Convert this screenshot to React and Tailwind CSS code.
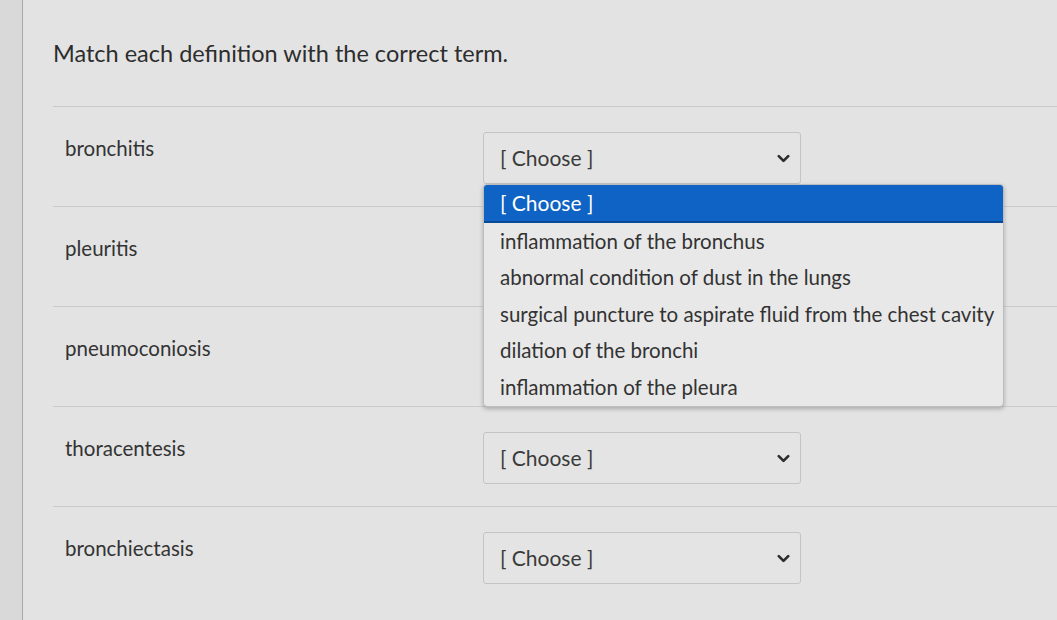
import { ChevronDown } from 'lucide-react'

const terms = ['bronchitis', 'pleuritis', 'pneumoconiosis', 'thoracentesis', 'bronchiectasis']

const options = [
  'inflammation of the bronchus',
  'abnormal condition of dust in the lungs',
  'surgical puncture to aspirate fluid from the chest cavity',
  'dilation of the bronchi',
  'inflammation of the pleura',
]

function Select({ open, hidden }) {
  return (
    <div className={`relative w-[318px] ${hidden ? 'invisible' : ''}`}>
      <div className="h-[52px] border border-[#c4c4c4] rounded-[3px] bg-[#e4e4e4] flex items-center justify-between pl-[16px] pr-[7px]">
        <span className="text-[21px] text-[#3a3a3a]">[ Choose ]</span>
        <ChevronDown className="w-[19px] h-[19px] text-[#2d2d2d]" strokeWidth={3.4} />
      </div>
      {open && (
        <div className="absolute left-0 top-[52px] w-[521px] z-10 bg-[#e8e8e8] border border-[#bdbdbd] rounded-[4px] shadow-[0_2px_4px_rgba(0,0,0,0.25)] overflow-hidden">
          <div className="h-[38px] bg-[#0f63c4] border-b-2 border-[#0b4a94] flex items-center px-[16px]">
            <span className="text-[21px] text-white">[ Choose ]</span>
          </div>
          {options.map(o => (
            <div key={o} className="h-[36.5px] flex items-center px-[16px] text-[20.5px] text-[#333] whitespace-nowrap">
              {o}
            </div>
          ))}
        </div>
      )}
    </div>
  )
}

export default function App() {
  return (
    <div className="w-[1057px] h-[620px] bg-[#d9d9d9] overflow-hidden" style={{ fontFamily: 'Lato, "Open Sans", sans-serif' }}>
      <div className="ml-[22px] h-full border-l border-[#a9a9a9] bg-[#e3e3e3] pl-[30px]">
        <h1 className="pt-[36px] h-[107px] text-[23.5px] text-[#2d2d2d] border-b border-[#c9c9c9]">
          Match each definition with the correct term.
        </h1>
        {terms.map((t, i) => (
          <div key={t} className="h-[100px] flex border-b border-[#cbcbcb] last:border-b-0">
            <div className="w-[430px] pl-[12px] pt-[26px] text-[20.5px] text-[#333]">{t}</div>
            <div className="pt-[25px]">
              {/* rows 2 and 3 sit under the open list */}
              <Select open={i === 0} hidden={i === 1 || i === 2} />
            </div>
          </div>
        ))}
      </div>
    </div>
  )
}
